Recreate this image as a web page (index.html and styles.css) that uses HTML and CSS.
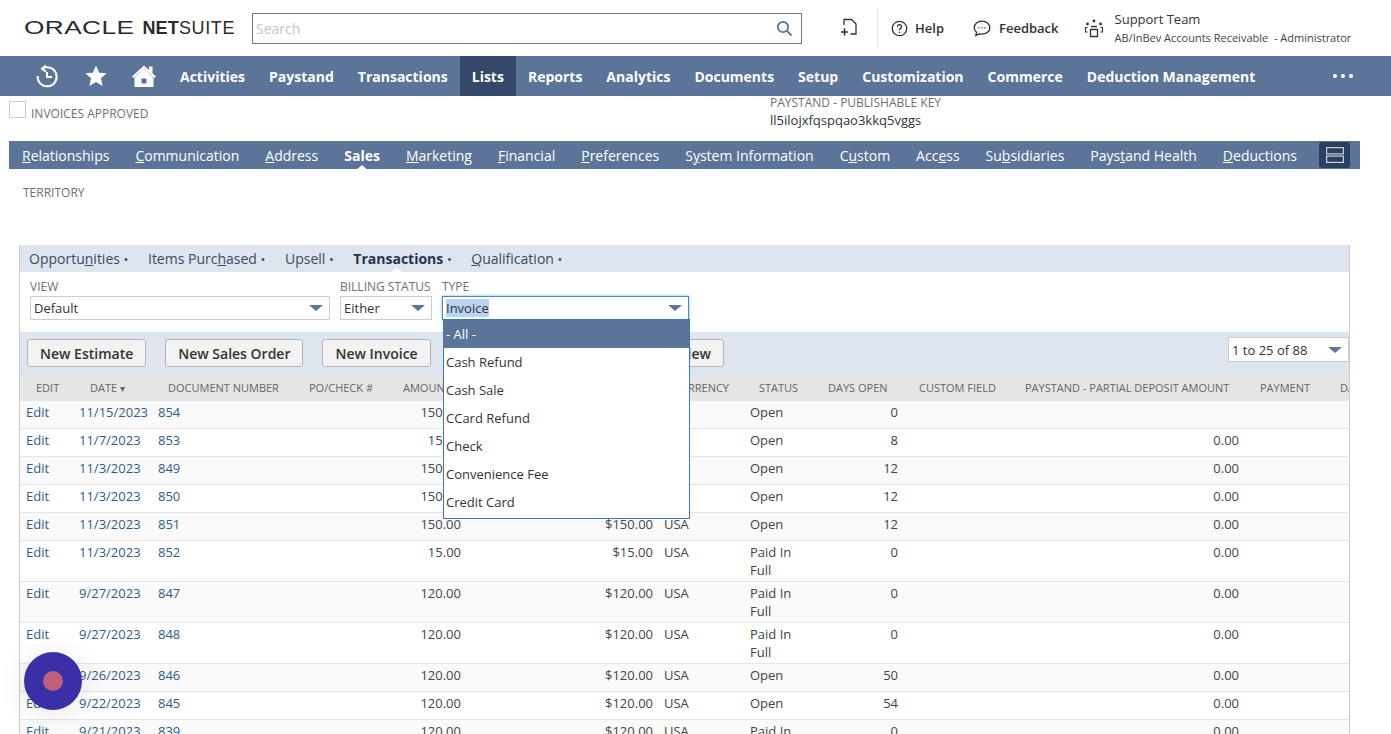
FILE: index.html
```html
<!DOCTYPE html>
<html lang="en-us">
<head>
  <meta charset="utf-8" />
  <title>Customer - NetSuite</title>
  <link rel="stylesheet" href="styles.css">
</head>
<body>
  <header class="top-bar">
    <div class="logo"><span class="logo-oracle">ORACLE</span><span class="logo-net">NET</span><span class="logo-suite">SUITE</span></div>
    <div class="search">
      <span class="search-text">Search</span>
      <svg width="18" height="18" viewBox="0 0 18 18" fill="none" stroke="#5a7595" stroke-width="1.8"><circle cx="8" cy="8" r="5.2"/><path d="M12 12l4.500 4.500"/></svg>
    </div>
    <svg class="new-icon" width="20" height="20" viewBox="0 0 20 20" fill="none" stroke="#333" stroke-width="1.3"><path d="M5 7V1.500h7.500l4.500 4.500v10h-5.500"/><path d="M5.500 10.500v7M2 14h7" stroke-width="1.600"/></svg>
    <div class="top-divider"></div>
    <div class="top-link">
      <svg width="17" height="17" viewBox="0 0 17 17" fill="none" stroke="#333" stroke-width="1.300"><circle cx="8.500" cy="8.500" r="7.200"/><path d="M6.400 6.700a2.100 2.100 0 1 1 3.300 1.700c-.8.500-1.200.9-1.200 1.800"/><path d="M8.500 11.700v1.300"/></svg>
      Help
    </div>
    <div class="top-link feedback">
      <svg width="18" height="17" viewBox="0 0 18 17" fill="none" stroke="#333" stroke-width="1.300"><path d="M9 1.200c4.300 0 7.800 2.900 7.800 6.500S13.300 14.200 9 14.200c-.9 0-1.800-.1-2.600-.4L2.800 15.500l.7-3.300C2 11 1.200 9.400 1.200 7.700 1.200 4.100 4.700 1.200 9 1.200z"/><path d="M5.500 7.700h1M8.500 7.700h1M11.500 7.700h1" stroke-width="1.600"/></svg>
      Feedback
    </div>
    <svg class="team-icon" width="20" height="20" viewBox="0 0 20 20" fill="#333" stroke="#333"><circle cx="10" cy="3" r="1.400" stroke="none"/><circle cx="3.500" cy="6" r="1.400" stroke="none"/><circle cx="16.500" cy="6" r="1.400" stroke="none"/><path d="M7 8.500h6" fill="none" stroke-width="1.400"/><path d="M6.500 11.500h7v7h-7z" fill="none" stroke-width="1.300"/><path d="M3.500 14H1.500V9.500h2M16.500 14h2V9.500h-2" fill="none" stroke-width="1.100"/></svg>
    <div class="account">
      <div class="account-name">Support Team</div>
      <div class="account-role">AB/InBev Accounts Receivable &nbsp;- Administrator</div>
    </div>
  </header>

  <nav class="main-nav">
    <svg class="nav-icon" width="24" height="24" viewBox="0 0 24 24" fill="none" stroke="#fff" stroke-width="2"><path d="M7 4.800A9.500 9.500 0 1 1 2.700 12"/><path d="M11 1.500L7 4.800l4 3"/><path d="M12 8v5h5"/></svg>
    <svg class="nav-icon star" width="24" height="24" viewBox="0 0 24 24" fill="#fff"><path d="M12 1.500l3.100 7.200 7.600.6-5.800 5 1.800 7.600-6.700-4-6.700 4 1.800-7.600-5.800-5 7.600-.6z"/></svg>
    <svg class="nav-icon home" width="26" height="24" viewBox="0 0 26 24" fill="#fff"><path d="M13 4.500L22.500 13.500V23H3.500V13.500z M10.500 14.500v5h5v-5z" fill-rule="evenodd"/><path d="M1 12.500L13 1.500l5 4.500V2.500h3.500v7l3.500 3-1.500 1.500L13 4.500 2.500 14z"/></svg>
    <a class="nav-item">Activities</a>
    <a class="nav-item">Paystand</a>
    <a class="nav-item">Transactions</a>
    <a class="nav-item active">Lists</a>
    <a class="nav-item">Reports</a>
    <a class="nav-item">Analytics</a>
    <a class="nav-item">Documents</a>
    <a class="nav-item">Setup</a>
    <a class="nav-item">Customization</a>
    <a class="nav-item">Commerce</a>
    <a class="nav-item">Deduction Management</a>
    <div class="nav-more"><i></i><i></i><i></i></div>
  </nav>

  <div class="field-row">
    <div class="check-field">
      <span class="checkbox"></span>
      <span class="field-label">INVOICES APPROVED</span>
    </div>
    <div class="key-field">
      <div class="field-label">PAYSTAND - PUBLISHABLE KEY</div>
      <div class="key-value">ll5ilojxfqspqao3kkq5vggs</div>
    </div>
  </div>

  <div class="sub-tabs">
    <a><u>R</u>elationships</a>
    <a><u>C</u>ommunication</a>
    <a><u>A</u>ddress</a>
    <a class="current">Sales</a>
    <a><u>M</u>arketing</a>
    <a><u>F</u>inancial</a>
    <a><u>P</u>references</a>
    <a>S<u>y</u>stem Information</a>
    <a>C<u>u</u>stom</a>
    <a>Acc<u>e</u>ss</a>
    <a>Su<u>b</u>sidiaries</a>
    <a>Pays<u>t</u>and Health</a>
    <a><u>D</u>eductions</a>
    <div class="layout-btn"><svg width="18" height="16" viewBox="0 0 18 16" fill="none" stroke="#c9d1de" stroke-width="1.200"><rect x="0.600" y="0.600" width="16.800" height="6.300"/><rect x="0.600" y="9.100" width="16.800" height="6.300"/></svg></div>
  </div>

  <div class="territory field-label">TERRITORY</div>

  <section class="panel">
    <div class="panel-tabs">
      <a>Opportu<u>n</u>ities <b>&bull;</b></a>
      <a>Items Purc<u>h</u>ased <b>&bull;</b></a>
      <a>Upsell <b>&bull;</b></a>
      <a class="current"><strong>Transactions</strong> <b>&bull;</b></a>
      <a><u>Q</u>ualification <b>&bull;</b></a>
    </div>

    <div class="filters">
      <div class="filter view-filter">
        <label class="field-label">VIEW</label>
        <div class="select"><span>Default</span><i class="arrow"></i></div>
      </div>
      <div class="filter billing-filter">
        <label class="field-label">BILLING STATUS</label>
        <div class="select"><span>Either</span><i class="arrow"></i></div>
      </div>
      <div class="filter type-filter">
        <label class="field-label">TYPE</label>
        <div class="select focused"><span class="selected-text">Invoice</span><i class="arrow"></i></div>
        <ul class="dropdown">
          <li class="hover">- All -</li>
          <li>Cash Refund</li>
          <li>Cash Sale</li>
          <li>CCard Refund</li>
          <li>Check</li>
          <li>Convenience Fee</li>
          <li>Credit Card</li>
        </ul>
      </div>
    </div>

    <div class="button-bar">
      <button>New Estimate</button>
      <button>New Sales Order</button>
      <button>New Invoice</button>
      <button>New Credit</button>
      <button>Statement Preview</button>
      <div class="select pager"><span>1 to 25 of 88</span><i class="arrow"></i></div>
    </div>

    <div class="table-wrap">
      <table>
        <colgroup>
          <col class="c-edit"><col class="c-date"><col class="c-doc"><col class="c-po"><col class="c-amount"><col class="c-remain"><col class="c-cur"><col class="c-status"><col class="c-days"><col class="c-custom"><col class="c-partial"><col class="c-pay"><col class="c-last">
        </colgroup>
        <thead>
          <tr>
            <th>EDIT</th><th>DATE <span class="sort">&#9662;</span></th><th>DOCUMENT NUMBER</th><th>PO/CHECK #</th><th>AMOUNT</th><th>AMOUNT REMAINING</th><th>CURRENCY</th><th>STATUS</th><th>DAYS OPEN</th><th>CUSTOM FIELD</th><th>PAYSTAND - PARTIAL DEPOSIT AMOUNT</th><th>PAYMENT</th><th>DATE</th>
          </tr>
        </thead>
        <tbody>
          <tr><td><a>Edit</a></td><td><a>11/15/2023</a></td><td><a>854</a></td><td></td><td class="num">150.00</td><td class="num">$150.00</td><td>USA</td><td>Open</td><td class="num">0</td><td></td><td class="num"></td><td></td><td></td></tr>
          <tr><td><a>Edit</a></td><td><a>11/7/2023</a></td><td><a>853</a></td><td></td><td class="num">15.00</td><td class="num">$15.00</td><td>USA</td><td>Open</td><td class="num">8</td><td></td><td class="num">0.00</td><td></td><td></td></tr>
          <tr><td><a>Edit</a></td><td><a>11/3/2023</a></td><td><a>849</a></td><td></td><td class="num">150.00</td><td class="num">$150.00</td><td>USA</td><td>Open</td><td class="num">12</td><td></td><td class="num">0.00</td><td></td><td></td></tr>
          <tr><td><a>Edit</a></td><td><a>11/3/2023</a></td><td><a>850</a></td><td></td><td class="num">150.00</td><td class="num">$150.00</td><td>USA</td><td>Open</td><td class="num">12</td><td></td><td class="num">0.00</td><td></td><td></td></tr>
          <tr><td><a>Edit</a></td><td><a>11/3/2023</a></td><td><a>851</a></td><td></td><td class="num">150.00</td><td class="num">$150.00</td><td>USA</td><td>Open</td><td class="num">12</td><td></td><td class="num">0.00</td><td></td><td></td></tr>
          <tr><td><a>Edit</a></td><td><a>11/3/2023</a></td><td><a>852</a></td><td></td><td class="num">15.00</td><td class="num">$15.00</td><td>USA</td><td>Paid In Full</td><td class="num">0</td><td></td><td class="num">0.00</td><td></td><td></td></tr>
          <tr><td><a>Edit</a></td><td><a>9/27/2023</a></td><td><a>847</a></td><td></td><td class="num">120.00</td><td class="num">$120.00</td><td>USA</td><td>Paid In Full</td><td class="num">0</td><td></td><td class="num">0.00</td><td></td><td></td></tr>
          <tr><td><a>Edit</a></td><td><a>9/27/2023</a></td><td><a>848</a></td><td></td><td class="num">120.00</td><td class="num">$120.00</td><td>USA</td><td>Paid In Full</td><td class="num">0</td><td></td><td class="num">0.00</td><td></td><td></td></tr>
          <tr><td><a>Edit</a></td><td><a>9/26/2023</a></td><td><a>846</a></td><td></td><td class="num">120.00</td><td class="num">$120.00</td><td>USA</td><td>Open</td><td class="num">50</td><td></td><td class="num">0.00</td><td></td><td></td></tr>
          <tr><td><a>Edit</a></td><td><a>9/22/2023</a></td><td><a>845</a></td><td></td><td class="num">120.00</td><td class="num">$120.00</td><td>USA</td><td>Open</td><td class="num">54</td><td></td><td class="num">0.00</td><td></td><td></td></tr>
          <tr><td><a>Edit</a></td><td><a>9/21/2023</a></td><td><a>839</a></td><td></td><td class="num">120.00</td><td class="num">$120.00</td><td>USA</td><td>Paid In Full</td><td class="num">0</td><td></td><td class="num">0.00</td><td></td><td></td></tr>
        </tbody>
      </table>
    </div>
  </section>

  <div class="chat-bubble"><i></i></div>
</body>
</html>
```

FILE: styles.css
```css
html, body {
  height: 100%;
  margin: 0;
  overflow: hidden;
}

body {
  background-color: #fff;
  font-family: "Open Sans", sans-serif;
  font-size: 13px;
  color: #333;
}

a {
  text-decoration: none;
}

/* top bar */
.top-bar {
  height: 56px;
  display: flex;
  align-items: center;
  padding-left: 24px;
  box-sizing: border-box;
}

.logo {
  width: 211px;
  margin-right: 17px;
  display: flex;
  align-items: baseline;
  font-family: "Liberation Sans", sans-serif;
  font-size: 18px;
  color: #2b2b2b;
  white-space: nowrap;
}

.logo-oracle {
  width: 121px;
  font-size: 19px;
  letter-spacing: 0.3px;
  transform: scaleX(1.38);
  transform-origin: left;
}

.logo-net {
  font-weight: bold;
  letter-spacing: 0.2px;
}

.logo-suite {
  letter-spacing: 0.6px;
}

.search {
  width: 550px;
  height: 31px;
  box-sizing: border-box;
  border: 1px solid #777;
  display: flex;
  align-items: center;
  justify-content: space-between;
  padding: 0 8px 0 3px;
}

.search-text {
  font-size: 14px;
  color: #c4c4c4;
}

.new-icon {
  margin-left: 37px;
}

.top-divider {
  width: 1px;
  height: 40px;
  margin: 0 13px 0 18px;
  background-color: #e6e6e6;
}

.top-link {
  display: flex;
  align-items: center;
  gap: 7px;
  font-size: 13px;
  font-weight: 600;
  color: #333;
}

.feedback {
  margin-left: 29px;
  gap: 8px;
}

.team-icon {
  margin: 0 11px 0 25px;
}

.account {
  margin-top: 2px;
}

.account-name {
  font-size: 13px;
  line-height: 18px;
}

.account-role {
  font-size: 11px;
  line-height: 20px;
  color: #444;
  white-space: nowrap;
}

/* main nav */
.main-nav {
  height: 40px;
  display: flex;
  align-items: stretch;
  background-color: #5b7498;
  padding-left: 35px;
  box-sizing: border-box;
}

.nav-icon {
  align-self: center;
  margin-right: 25px;
}

.nav-icon.star {
  margin-right: 23px;
}

.nav-icon.home {
  margin-right: 11px;
}

.nav-item {
  display: flex;
  align-items: center;
  padding: 0 12px;
  color: #fff;
  font-size: 14px;
  font-weight: 700;
  white-space: nowrap;
}

.nav-item.active {
  background-color: #33486a;
}

.nav-more {
  display: flex;
  align-items: center;
  gap: 4px;
  margin-left: 66px;
}

.nav-more i {
  width: 4px;
  height: 4px;
  border-radius: 50%;
  background-color: #fff;
}

/* fields above the tabs */
.field-row {
  height: 45px;
  display: flex;
  padding-left: 9px;
  box-sizing: border-box;
}

.field-label {
  font-size: 12px;
  color: #6f6f6f;
}

.check-field {
  width: 761px;
  display: flex;
  padding-top: 5px;
  gap: 5px;
}

.checkbox {
  width: 15px;
  height: 15px;
  border: 1px solid #ccc;
}

.check-field .field-label {
  padding-top: 4px;
}

.key-field .field-label {
  line-height: 13px;
}

.key-value {
  font-size: 13px;
  line-height: 22px;
  color: #333;
}

/* record sub tabs */
.sub-tabs {
  position: relative;
  height: 28px;
  width: 1351px;
  margin-left: 9px;
  padding-left: 13px;
  box-sizing: border-box;
  display: flex;
  align-items: center;
  gap: 26px;
  background-color: #5b7498;
}

.sub-tabs a {
  position: relative;
  color: #fff;
  font-size: 14px;
  white-space: nowrap;
}

.sub-tabs a.current {
  font-weight: 700;
}

.sub-tabs a.current::after {
  content: "";
  position: absolute;
  left: 11px;
  bottom: -6px;
  border: 7px solid transparent;
  border-top: 0;
  border-bottom: 6px solid #fff;
}

.layout-btn {
  position: absolute;
  right: 10px;
  top: 1px;
  width: 31px;
  height: 26px;
  border-radius: 3px;
  background-color: #2b3f60;
  display: flex;
  align-items: center;
  justify-content: center;
}

.territory {
  margin: 17px 0 45px 23px;
  height: 14px;
  line-height: 14px;
}

/* transactions panel */
.panel {
  width: 1331px;
  margin-left: 19px;
  box-sizing: border-box;
  border-left: 1px solid #ccc;
  border-right: 1px solid #ccc;
}

.panel-tabs {
  height: 27px;
  display: flex;
  align-items: center;
  gap: 19.5px;
  padding-left: 9px;
  background-color: #dfe5ef;
  font-size: 14px;
  color: #3a4a63;
}

.panel-tabs a {
  position: relative;
  white-space: nowrap;
}

.panel-tabs b {
  font-size: 13px;
  font-weight: 400;
}

.panel-tabs strong {
  color: #24344f;
}

.panel-tabs a.current::after {
  content: "";
  position: absolute;
  left: 37px;
  bottom: -5px;
  border: 7px solid transparent;
  border-top: 0;
  border-bottom: 5px solid #fff;
}

.filters {
  height: 60px;
  display: flex;
  gap: 10px;
  padding: 8px 0 0 10px;
  box-sizing: border-box;
}

.filter {
  position: relative;
}

.filter .field-label {
  display: block;
  height: 16px;
  line-height: 14px;
  white-space: nowrap;
}

.view-filter {
  width: 300px;
}

.billing-filter {
  width: 92px;
}

.type-filter {
  width: 247px;
}

.select {
  height: 24px;
  box-sizing: border-box;
  border: 1px solid #ccc;
  background-color: #fff;
  display: flex;
  align-items: center;
  justify-content: space-between;
  padding: 0 6px 0 3px;
  font-size: 13px;
}

.arrow {
  width: 0;
  height: 0;
  border-left: 7px solid transparent;
  border-right: 7px solid transparent;
  border-top: 6px solid #5b7498;
}

.select.focused {
  border: 1px solid #4f88b8;
  box-shadow: 0 0 3px #7fb5e0;
}

.selected-text {
  background-color: #b9d3f3;
}

.dropdown {
  position: absolute;
  z-index: 2;
  left: 1px;
  top: 39px;
  width: 247px;
  margin: 0;
  padding: 0 0 2px;
  box-sizing: border-box;
  list-style: none;
  background-color: #fff;
  border: 1px solid #3f77a6;
  font-size: 13px;
}

.dropdown li {
  height: 28px;
  line-height: 28px;
  padding-left: 2px;
  color: #333;
}

.dropdown li.hover {
  background-color: #5b7498;
  color: #fff;
}

.button-bar {
  position: relative;
  height: 43px;
  display: flex;
  align-items: center;
  gap: 19px;
  padding-left: 7px;
  padding-bottom: 1px;
  box-sizing: border-box;
  background-color: #dfe5ef;
}

.button-bar button {
  height: 28px;
  padding: 0 12px;
  border: 1px solid #b5b5b5;
  border-radius: 3px;
  background-color: #f2f2f2;
  font-family: "Open Sans", sans-serif;
  font-size: 14px;
  font-weight: 600;
  color: #333;
  white-space: nowrap;
}

.select.pager {
  position: absolute;
  right: 0;
  top: 5px;
  width: 121px;
  height: 25px;
}

/* results table */
.table-wrap {
  overflow: hidden;
}

table {
  width: 1400px;
  table-layout: fixed;
  border-collapse: collapse;
}

.c-edit { width: 54px; }
.c-date { width: 78px; }
.c-doc { width: 142px; }
.c-po { width: 94px; }
.c-amount { width: 79px; }
.c-remain { width: 191px; }
.c-cur { width: 86px; }
.c-status { width: 69px; }
.c-days { width: 91px; }
.c-custom { width: 106px; }
.c-partial { width: 235px; }
.c-pay { width: 80px; }
.c-last { width: 95px; }

th {
  height: 26px;
  padding: 0 0 2px 15px;
  box-sizing: border-box;
  background-color: #e5e5e5;
  font-size: 11px;
  font-weight: 400;
  color: #666;
  text-align: left;
  white-space: nowrap;
  overflow: hidden;
}

th:nth-child(-n+3) {
  padding-left: 16px;
}

.sort {
  font-size: 10px;
}

td {
  height: 28px;
  padding: 2px 6px 2px;
  box-sizing: border-box;
  font-size: 13px;
  line-height: 18px;
  color: #444;
  vertical-align: top;
  border-bottom: 1px solid #e5e5e5;
}

tbody tr:first-child td {
  height: 27px;
}

td:nth-child(2) {
  padding-left: 5px;
}

td:nth-child(6) {
  padding-right: 5px;
}

tbody tr:nth-child(odd) td {
  background-color: #fafafa;
}

td a {
  color: #2f5a8c;
}

td.num {
  text-align: right;
}

/* chat launcher */
.chat-bubble {
  position: absolute;
  left: 24px;
  top: 652px;
  width: 58px;
  height: 58px;
  border-radius: 50%;
  background-color: #3a2fa6;
  box-shadow: 0 4px 30px rgba(0, 0, 0, 0.1);
  display: flex;
  align-items: center;
  justify-content: center;
}

.chat-bubble i {
  width: 20px;
  height: 20px;
  border-radius: 50%;
  background-color: #bf5f7e;
}
```
